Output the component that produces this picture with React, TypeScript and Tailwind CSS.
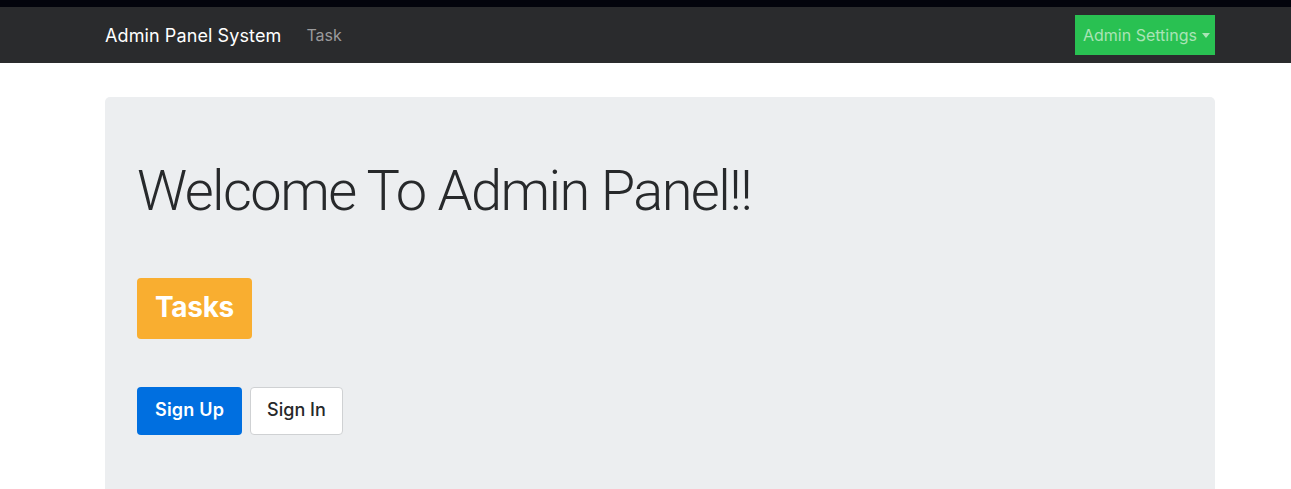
import React from "react";

const font = { fontFamily: "Inter, 'Helvetica Neue', Arial, sans-serif" };

function Navbar() {
  return (
    <nav className="bg-[#2a2b2d] h-[56px]">
      <div className="ml-[105px] w-[1110px] h-full flex items-center justify-between">
        <div className="flex items-center">
          <span className="text-white text-[18px] tracking-[0.1px]">Admin Panel System</span>
          <span className="ml-[25px] text-[#9a9a9c] text-[16px]">Task</span>
        </div>
        <button className="h-[40px] w-[140px] bg-[#29c152] flex items-center pl-[8px] text-[16px] text-[#a9e4b6]">
          Admin Settings
          <span className="ml-[5px] inline-block w-0 h-0 border-l-[4px] border-r-[4px] border-t-[5px] border-l-transparent border-r-transparent border-t-[#a9e4b6]" />
        </button>
      </div>
    </nav>
  );
}

export default function App() {
  return (
    <div className="h-[489px] bg-white overflow-hidden" style={font}>
      <div className="h-[7px] bg-[#03040c]" />
      <Navbar />
      <main className="ml-[105px] w-[1110px] mt-[34px]">
        <section className="bg-[#eceef0] rounded-[5px] pt-[61px] pb-[64px] px-[32px] h-[420px]">
          <h1
            className="text-[56px] leading-[1.2] font-light text-[#27292b] tracking-[-1.6px]"
            style={{ fontFamily: "Roboto, Inter, sans-serif" }}
          >
            Welcome To Admin Panel!!
          </h1>
          <div className="mt-[53px]">
            <button className="h-[61px] px-[18px] pb-[4px] rounded-[4px] bg-[#f9ae30] text-white text-[28px] font-bold tracking-[-0.3px]">
              Tasks
            </button>
          </div>
          <div className="mt-[48px] flex gap-[8px]">
            <button className="h-[48px] px-[18px] pb-[4px] rounded-[4px] bg-[#006fe0] text-white text-[18px] font-semibold tracking-[0.2px]">
              Sign Up
            </button>
            <button className="h-[48px] px-[16px] pb-[4px] rounded-[4px] bg-white border border-[#cfd1d3] text-[#26282a] text-[18px] font-medium">
              Sign In
            </button>
          </div>
        </section>
      </main>
    </div>
  );
}
